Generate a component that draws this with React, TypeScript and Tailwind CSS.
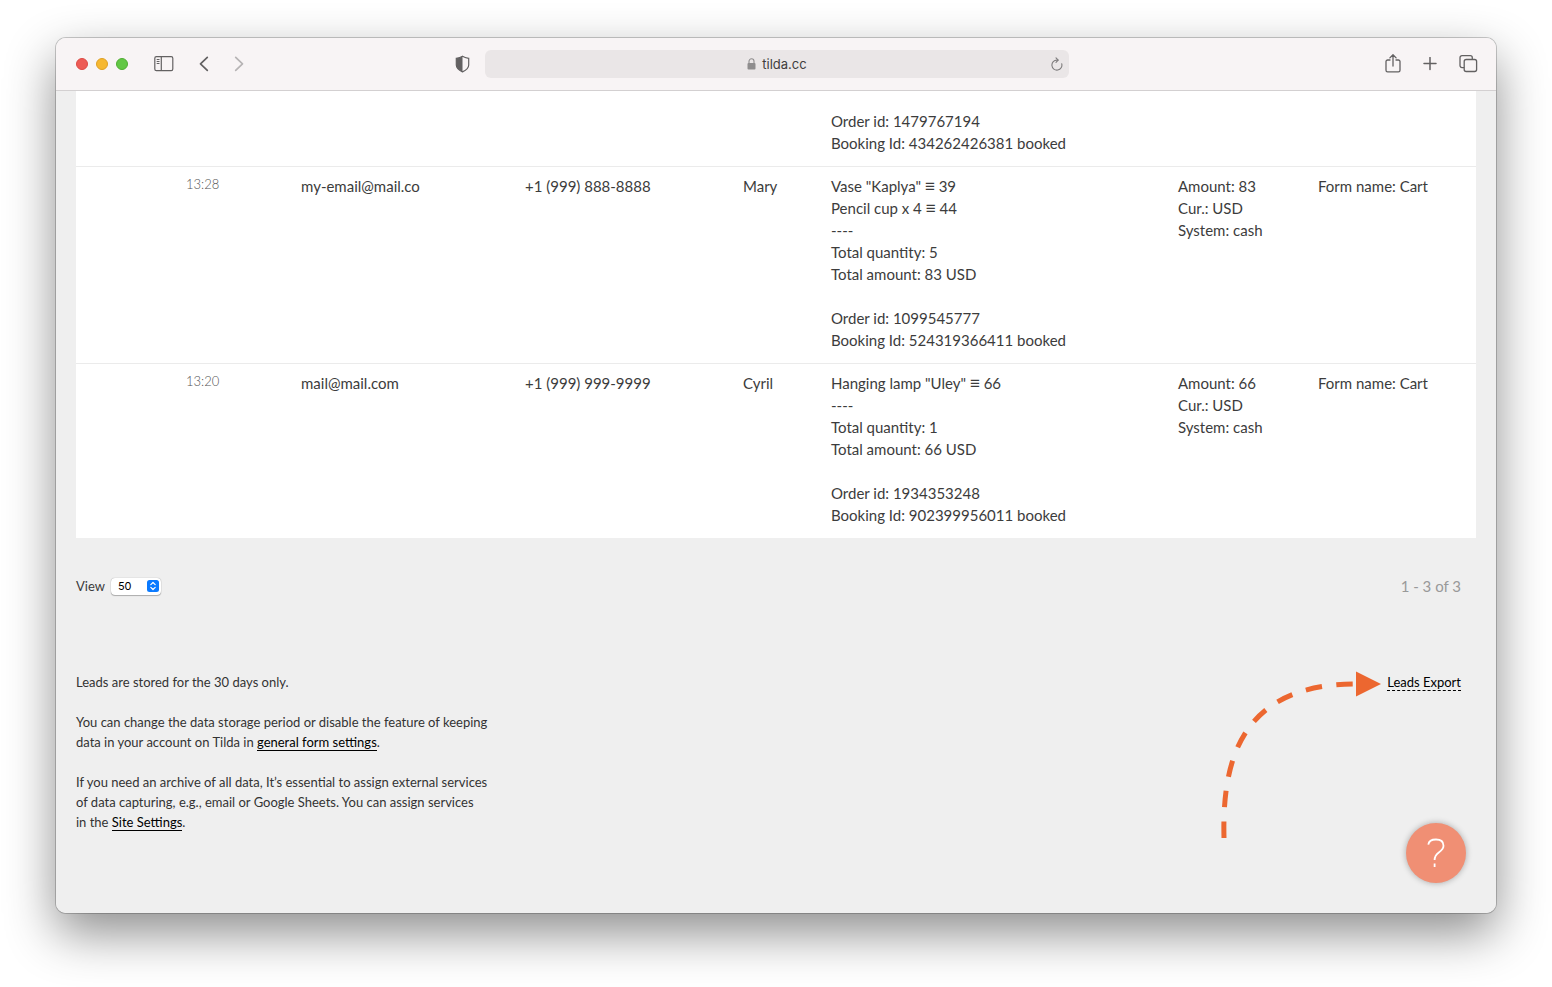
import type { ReactNode } from 'react';

interface Lead {
  time: string;
  email: string;
  phone: string;
  name: string;
  order: string[];
  payment: string[];
  form: string;
}

const leads: Lead[] = [
  {
    time: '13:28',
    email: 'my-email@mail.co',
    phone: '+1 (999) 888-8888',
    name: 'Mary',
    order: [
      'Vase "Kaplya" ≡ 39',
      'Pencil cup x 4 ≡ 44',
      '----',
      'Total quantity: 5',
      'Total amount: 83 USD',
      '',
      'Order id: 1099545777',
      'Booking Id: 524319366411 booked',
    ],
    payment: ['Amount: 83', 'Cur.: USD', 'System: cash'],
    form: 'Form name: Cart',
  },
  {
    time: '13:20',
    email: 'mail@mail.com',
    phone: '+1 (999) 999-9999',
    name: 'Cyril',
    order: [
      'Hanging lamp "Uley" ≡ 66',
      '----',
      'Total quantity: 1',
      'Total amount: 66 USD',
      '',
      'Order id: 1934353248',
      'Booking Id: 902399956011 booked',
    ],
    payment: ['Amount: 66', 'Cur.: USD', 'System: cash'],
    form: 'Form name: Cart',
  },
];

function Lines({ items }: { items: string[] }) {
  return (
    <>
      {items.map((line, i) => {
        const [text, price] = line.split('≡');
        return (
          <span key={i} className="block h-[22px] whitespace-nowrap">
            {text}
            {price && <span className="font-['Liberation_Sans',sans-serif] text-[17px]">≡</span>}
            {price}
          </span>
        );
      })}
    </>
  );
}

function ToolButton({ label, children }: { label: string; children: ReactNode }) {
  return (
    <button type="button" aria-label={label} className="flex h-6 items-center justify-center">
      {children}
    </button>
  );
}

function Toolbar() {
  return (
    <header className="flex h-[53px] items-center border-b border-[#d3d0d1] bg-[#f8f4f5] pr-[18px] pl-5 text-[#636162]">
      {/* Window controls and navigation */}
      <div className="flex flex-1 items-center">
        <div className="flex gap-2">
          <button type="button" aria-label="Close" className="size-3 rounded-full border border-[#dd4a44] bg-[#ed5b55]" />
          <button type="button" aria-label="Minimize" className="size-3 rounded-full border border-[#dfa023] bg-[#f6b831]" />
          <button type="button" aria-label="Zoom" className="size-3 rounded-full border border-[#50ad33] bg-[#62c745]" />
        </div>
        <div className="ml-[26px]">
          <ToolButton label="Sidebar">
            <svg width="20" height="16" viewBox="0 0 20 16" fill="none" stroke="currentColor" strokeWidth="1.2">
              <rect x="0.8" y="0.6" width="18" height="14" rx="1.6" />
              <path d="M7.3 0.6v14" />
              <path d="M2.7 3.5h2.8M2.7 5.5h2.8M2.7 7.5h2.8" strokeWidth="1" />
            </svg>
          </ToolButton>
        </div>
        <div className="ml-6">
          <ToolButton label="Back">
            <svg width="12" height="16" viewBox="0 0 12 16" fill="none" stroke="currentColor" strokeWidth="1.7" strokeLinecap="round" strokeLinejoin="round">
              <path d="M9.3 1.4L2.5 7.9l6.8 6.5" />
            </svg>
          </ToolButton>
        </div>
        <div className="ml-6 text-[#b7b4b5]">
          <ToolButton label="Forward">
            <svg width="12" height="16" viewBox="0 0 12 16" fill="none" stroke="currentColor" strokeWidth="1.7" strokeLinecap="round" strokeLinejoin="round">
              <path d="M1.7 1.4L8.5 7.9l-6.8 6.5" />
            </svg>
          </ToolButton>
        </div>
        <div className="mr-[15px] ml-auto">
          <ToolButton label="Privacy report">
            <svg width="15" height="18" viewBox="0 0 15 18" fill="none">
              <path d="M7.5 1.2C9.3 2.4 11.6 3 13.7 3.3V10c0 3-3 5.4-6.2 6.9C4.3 15.4 1.3 13 1.3 10V3.3C3.4 3 5.7 2.4 7.5 1.2z" stroke="currentColor" strokeWidth="1.2" />
              <path d="M7.5 1.2v15.7C4.3 15.4 1.3 13 1.3 10V3.3C3.4 3 5.7 2.4 7.5 1.2z" fill="currentColor" />
            </svg>
          </ToolButton>
        </div>
      </div>

      {/* Address bar */}
      <div className="grid h-7 w-5/12 grid-cols-[1fr_auto_1fr] items-center rounded-md bg-[#eae6e7] px-[5px]">
        <span />
        <div className="flex items-center gap-[6px]">
          <svg width="9" height="12" viewBox="0 0 9 12" className="text-[#8f8d8e]">
            <rect x="0.5" y="5" width="8" height="6.5" rx="1" fill="currentColor" />
            <path d="M2 5.5V3.3a2.5 2.5 0 0 1 5 0v2.2" fill="none" stroke="currentColor" strokeWidth="1.1" />
          </svg>
          <span className="font-[Inter,sans-serif] text-[13px] leading-5 text-[#3f3d3e]">tilda.cc</span>
        </div>
        <div className="flex justify-end">
          <ToolButton label="Reload">
            <svg width="14" height="14" viewBox="0 0 14 14" fill="none" stroke="#7d7b7c" strokeWidth="1.1" strokeLinecap="round" strokeLinejoin="round">
              <path d="M11.700 6.700A5 5 0 1 1 7 3.100h1" />
              <path d="M6 0.900l2.200 2.200L6 5.300" />
            </svg>
          </ToolButton>
        </div>
      </div>

      {/* Page actions */}
      <div className="flex flex-1 items-center justify-end gap-[22px]">
        <ToolButton label="Share">
          <svg width="16" height="20" viewBox="0 0 16 20" fill="none" stroke="currentColor" strokeWidth="1.3" strokeLinecap="round" strokeLinejoin="round">
            <path d="M5 6H2.600A1.600 1.600 0 0 0 1 7.600v8.600a1.600 1.600 0 0 0 1.600 1.600h10.800a1.600 1.600 0 0 0 1.600-1.600V7.600A1.600 1.600 0 0 0 13.400 6H11" />
            <path d="M8 12V0.900M4.900 3.900L8 0.800l3.100 3.100" />
          </svg>
        </ToolButton>
        <ToolButton label="New tab">
          <svg width="14" height="14" viewBox="0 0 14 14" fill="none" stroke="currentColor" strokeWidth="1.5" strokeLinecap="round">
            <path d="M7 0.500v12M1 6.500h12" />
          </svg>
        </ToolButton>
        <ToolButton label="Show tabs">
          <svg width="19" height="18" viewBox="0 0 19 18" fill="none" stroke="currentColor" strokeWidth="1.3" strokeLinejoin="round">
            <rect x="5.200" y="4.500" width="12.400" height="12" rx="2" />
            <path d="M5.200 12.600H3a2 2 0 0 1-2-2V2.700a2 2 0 0 1 2-2h8.300a2 2 0 0 1 2 2v1.800" />
          </svg>
        </ToolButton>
      </div>
    </header>
  );
}

function LeadsTable() {
  return (
    <table className="w-full table-fixed bg-white text-left text-[15px] leading-[22px] text-[#3c3c3c]">
      <colgroup>
        <col className="w-[110px]" />
        <col className="w-[115px]" />
        <col className="w-[224px]" />
        <col className="w-[218px]" />
        <col className="w-[88px]" />
        <col className="w-[347px]" />
        <col className="w-[140px]" />
        <col className="w-[158px]" />
      </colgroup>
      <tbody>
        {/* Tail of the lead scrolled under the toolbar */}
        <tr className="border-b border-[#ebebeb]">
          <td colSpan={5} />
          <td className="pt-[19px] pb-3">
            <Lines items={['Order id: 1479767194', 'Booking Id: 434262426381 booked']} />
          </td>
          <td colSpan={2} />
        </tr>
        {leads.map((lead) => (
          <tr key={lead.time} className="border-b border-[#ebebeb] align-top last:border-b-0">
            <td />
            <td className="py-2 text-[13px] leading-[18px] font-light text-[#555555]">{lead.time}</td>
            <td className="pt-2 pb-3">{lead.email}</td>
            <td className="pt-2 pb-3">{lead.phone}</td>
            <td className="pt-2 pb-3">{lead.name}</td>
            <td className="pt-2 pb-3">
              <Lines items={lead.order} />
            </td>
            <td className="pt-2 pb-3">
              <Lines items={lead.payment} />
            </td>
            <td className="pt-2 pb-3">{lead.form}</td>
          </tr>
        ))}
      </tbody>
    </table>
  );
}

function Pagination() {
  return (
    <div className="mt-9 flex h-6 items-center justify-between pr-[15px]">
      <div className="flex items-center gap-[6px]">
        <label htmlFor="page-size" className="text-[13px] leading-5 text-[#3c3c3c]">
          View
        </label>
        <div className="relative flex">
          <select
            id="page-size"
            defaultValue="50"
            className="h-[17px] w-[50px] appearance-none rounded bg-white pl-[7px] font-[Inter,sans-serif] text-[11px] leading-[17px] text-black shadow-[0_0_1px_rgba(0,0,0,0.4),0_1px_1px_rgba(0,0,0,0.25)]"
          >
            <option>20</option>
            <option>50</option>
            <option>100</option>
          </select>
          <svg width="12" height="12" viewBox="0 0 12 12" className="pointer-events-none absolute top-[2px] right-[2px]">
            <rect width="12" height="12" rx="2.5" fill="#0a7aff" />
            <path d="M3.800 4.700L6 2.500l2.200 2.200M3.800 7.300L6 9.500l2.200-2.200" fill="none" stroke="#fff" strokeWidth="1.2" strokeLinecap="round" strokeLinejoin="round" />
          </svg>
        </div>
      </div>
      <span className="text-[15px] leading-6 text-[#999999]">1 - 3 of 3</span>
    </div>
  );
}

function ExportArrow() {
  return (
    <svg width="160" height="170" viewBox="0 0 160 170" className="pointer-events-none absolute top-[-2px] right-full mr-[6px]">
      <path d="M3 168C1 90 20 14 135 14" fill="none" stroke="#ec6730" strokeWidth="5" strokeDasharray="16.500 14.300" />
      <path d="M135 1.500L160 14l-25 12.500z" fill="#ec6730" />
    </svg>
  );
}

export default function App() {
  return (
    <div className="flex min-h-screen flex-col bg-white px-14 pt-[38px] pb-[74px] font-[Lato,sans-serif]">
      <div className="relative flex flex-1 flex-col rounded-[10px] shadow-[0_0_0_1px_rgba(0,0,0,0.2),0_20px_50px_rgba(0,0,0,0.45)]">
        <div className="flex flex-1 flex-col overflow-hidden rounded-[10px] bg-[#efefef]">
          <Toolbar />
          <main className="flex-1 px-5 pb-20">
            <LeadsTable />
            <Pagination />

            <div className="mt-[74px] flex items-start justify-between pr-[15px] text-[13px] leading-5 text-[#333333]">
              <div className="space-y-5">
                <p>Leads are stored for the 30 days only.</p>
                <p>
                  You can change the data storage period or disable the feature of keeping
                  <br />
                  data in your account on Tilda in{' '}
                  <a href="#form-settings" className="border-b border-black text-black">
                    general form settings
                  </a>
                  .
                </p>
                <p>
                  If you need an archive of all data, It’s essential to assign external services
                  <br />
                  of data capturing, e.g., email or Google Sheets. You can assign services
                  <br />
                  in the{' '}
                  <a href="#site-settings" className="border-b border-black text-black">
                    Site Settings
                  </a>
                  .
                </p>
              </div>

              <div className="relative">
                <ExportArrow />
                <a href="#export" className="border-b border-dashed border-black text-black">
                  Leads Export
                </a>
              </div>
            </div>
          </main>
        </div>

        {/* Help */}
        <button
          type="button"
          aria-label="Help"
          className="absolute right-[30px] bottom-[30px] flex size-[60px] items-center justify-center rounded-full bg-[#f08f74] shadow-[0_0_6px_rgba(0,0,0,0.3)]"
        >
          <svg width="18" height="30" viewBox="0 0 18 30" fill="none" stroke="#fff" strokeWidth="1.8">
            <path d="M1.300 6.700C1.800 3 5 1.500 9 1.500c4.500 0 7.500 2.200 7.500 6.200 0 3.300-2.300 5-4.700 6.700C9 16.400 7.600 17.800 7.600 22M7.600 25.500v3.500" />
          </svg>
        </button>
      </div>
    </div>
  );
}
